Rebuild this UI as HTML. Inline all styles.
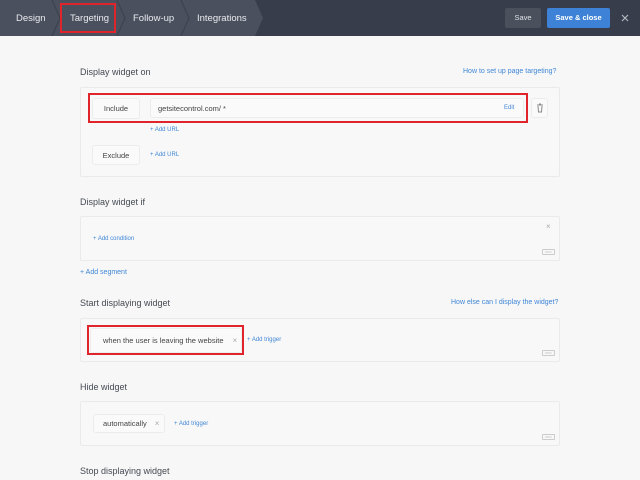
<!DOCTYPE html>
<html><head><style>
*{margin:0;padding:0;box-sizing:border-box}
body{width:640px;height:480px;overflow:hidden;background:#f7f7f7;font-family:"Liberation Sans",sans-serif;position:relative;color:#3a3d44}
.a{position:absolute}
.hdr{left:0;top:0;width:640px;height:36px;background:#373d4b}
.tab{color:#e9ebef;font-size:9.5px;top:13px}
.lbl{font-size:9px;color:#444a52;left:80px}
.box{left:80px;width:480px;border:1px solid #eaeaea;background:#f8f8f8;border-radius:2px}
.lnk{color:#3f86d6;font-size:7px}
.pill{background:#fafafa;border:1px solid #ececec;border-radius:3px;font-size:7.5px;color:#444;display:flex;align-items:center}
.red{border:2px solid #e0242b}
.pro{width:13px;height:6px;border:1px solid #ccc;border-radius:1px;font-size:3px;color:#bbb;text-align:center;line-height:4px}
.x{font-size:8px;color:#aaa}
</style></head><body>
<div class="a hdr"></div>
<svg class="a" style="left:0;top:0" width="270" height="36"><polygon points="0,0 255,0 263,18 255,36 0,36" fill="#4a505d"/>
<polyline points="52,0 60,18 52,36" fill="none" stroke="#3a404c" stroke-width="1"/>
<polyline points="117,0 125,18 117,36" fill="none" stroke="#3a404c" stroke-width="1"/>
<polyline points="181,0 189,18 181,36" fill="none" stroke="#3a404c" stroke-width="1"/></svg>
<div class="a tab" style="left:16px">Design</div>
<div class="a tab" style="left:70px">Targeting</div>
<div class="a tab" style="left:133px">Follow-up</div>
<div class="a tab" style="left:197px">Integrations</div>
<div class="a red" style="left:60px;top:3px;width:56px;height:30px"></div>
<div class="a" style="left:505px;top:8px;width:36px;height:20px;background:#4a505c;border-radius:2px;color:#dfe2e6;font-size:7.5px;text-align:center;line-height:20px">Save</div>
<div class="a" style="left:547px;top:8px;width:63px;height:20px;background:#3d82d6;border-radius:2px;color:#fff;font-size:7.5px;font-weight:bold;text-align:center;line-height:20px">Save &amp; close</div>
<svg class="a" style="left:621px;top:14px" width="8" height="8"><path d="M1 1L7 7M7 1L1 7" stroke="#b8bcc4" stroke-width="1.1"/></svg>

<div class="a lbl" style="top:67px">Display widget on</div>
<div class="a lnk" style="left:463px;top:68px">How to set up page targeting?</div>
<div class="a box" style="top:87px;height:90px"></div>
<div class="a pill" style="left:92px;top:98px;width:48px;height:21px;justify-content:center">Include</div>
<div class="a pill" style="left:150px;top:98px;width:374px;height:20px;padding-left:7px">getsitecontrol.com/ *</div>
<div class="a lnk" style="left:504px;top:105px;font-size:6px">Edit</div>
<div class="a red" style="left:88px;top:93px;width:440px;height:30px"></div>
<div class="a pill" style="left:531px;top:98px;width:17px;height:20px;justify-content:center"><svg width="8" height="10"><path d="M1 2h6M3 1h2M2 3l.5 6h3L6 3" fill="none" stroke="#888" stroke-width="1"/></svg></div>
<div class="a lnk" style="left:150px;top:127px;font-size:6px">+ Add URL</div>
<div class="a pill" style="left:92px;top:145px;width:48px;height:20px;justify-content:center">Exclude</div>
<div class="a lnk" style="left:150px;top:152px;font-size:6px">+ Add URL</div>

<div class="a lbl" style="top:197px">Display widget if</div>
<div class="a box" style="top:216px;height:45px"></div>
<div class="a lnk" style="left:93px;top:236px;font-size:6px">+ Add condition</div>
<div class="a x" style="left:546px;top:222px">×</div>
<div class="a pro" style="left:542px;top:249px">PRO</div>
<div class="a lnk" style="left:80px;top:269px">+ Add segment</div>

<div class="a lbl" style="top:298px">Start displaying widget</div>
<div class="a lnk" style="left:451px;top:299px">How else can I display the widget?</div>
<div class="a box" style="top:318px;height:44px"></div>
<div class="a pill" style="left:90px;top:328px;width:152px;height:25px;padding-left:12px">when the user is leaving the website<span class="x" style="margin-left:9px">×</span></div>
<div class="a red" style="left:87px;top:325px;width:157px;height:30px"></div>
<div class="a lnk" style="left:247px;top:337px;font-size:6px">+ Add trigger</div>
<div class="a pro" style="left:542px;top:350px">PRO</div>

<div class="a lbl" style="top:382px">Hide widget</div>
<div class="a box" style="top:401px;height:45px"></div>
<div class="a pill" style="left:93px;top:414px;width:72px;height:19px;padding-left:9px">automatically<span class="x" style="margin-left:8px">×</span></div>
<div class="a lnk" style="left:174px;top:421px;font-size:6px">+ Add trigger</div>
<div class="a pro" style="left:542px;top:434px">PRO</div>

<div class="a lbl" style="top:466px">Stop displaying widget</div>
</body></html>
